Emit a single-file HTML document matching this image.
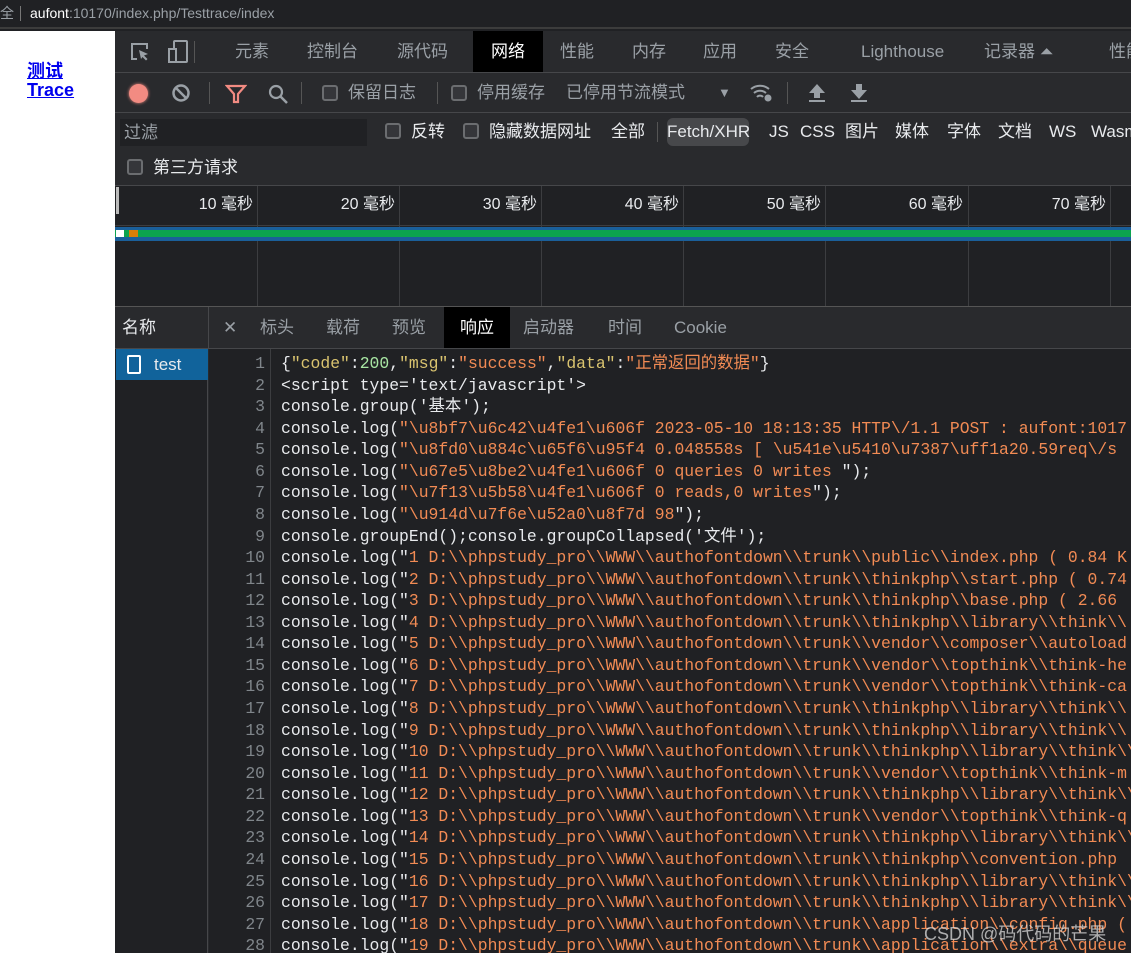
<!DOCTYPE html>
<html><head><meta charset="utf-8"><style>
*{margin:0;padding:0;box-sizing:border-box}
html,body{overflow:hidden}
body{width:1131px;height:953px;overflow:hidden;background:#202124;font-family:"Liberation Sans","Noto Sans CJK SC",sans-serif;position:relative;color:#bdc1c6}
.abs{position:absolute}
.top{left:0;top:0;width:1131px;height:29px;background:#202124;font-size:14px;color:#9aa0a6;line-height:26px;border-bottom:2px solid #3c3c3c}
.page{left:0;top:31px;width:115px;height:922px;background:#fff}
.page a{position:absolute;left:27px;color:#00e;font-weight:bold;font-size:18px;text-decoration:underline}
.dt{left:115px;top:31px;width:1016px;height:922px;background:#292a2d;overflow:hidden}
.row{position:absolute;left:0;width:1016px;white-space:nowrap;font-size:17px;color:#9aa0a6}
.row span{position:absolute}
.cb{position:absolute;width:16px;height:16px;border:2px solid #6b6d70;border-radius:3px;background:#35363a}
.hl{position:absolute;height:1px;background:#46474a;left:0;width:1016px}
.codewrap{position:absolute;left:281px;top:353px;width:850px;height:600px;overflow:hidden}
.code{font-family:"Liberation Mono","Noto Sans CJK SC",monospace;font-size:16.4px;line-height:21.56px;color:#e8eaed;white-space:pre}
.ln{position:absolute;left:209px;width:56px;top:353px;text-align:right;font-family:"Liberation Mono",monospace;font-size:16.4px;line-height:21.56px;color:#80868b;white-space:pre}
.s{color:#f28b54}.k{color:#d9c36f}.n{color:#a8e6a3}
</style></head><body>
<div class="abs top"><span style="position:absolute;left:0">全</span><span style="position:absolute;left:20px;top:6px;width:1px;height:15px;background:#777"></span><span style="position:absolute;left:30px"><span style="color:#fff">aufont</span>:10170/index.php/Testtrace/index</span></div>
<div class="abs page"><a style="top:26px">测试</a><a style="top:49px">Trace</a></div>
<div class="abs dt">
 <div class="row" style="top:0;height:41px;line-height:42px">
  <svg style="position:absolute;left:14px;top:10px" width="22" height="22" viewBox="0 0 22 22"><path d="M8 18H3V3h15v5" fill="none" stroke="#9aa0a6" stroke-width="2"/><path d="M10 9l9 4-4 1.5 3.5 3.5-1.5 1.5-3.5-3.5L12 18z" fill="#9aa0a6"/></svg>
  <svg style="position:absolute;left:52px;top:9px" width="22" height="24" viewBox="0 0 22 24"><rect x="7" y="1" width="13" height="21" rx="1" fill="none" stroke="#9aa0a6" stroke-width="2"/><rect x="2" y="9" width="7" height="13" fill="#292a2d" stroke="#9aa0a6" stroke-width="2"/></svg>
  <i style="position:absolute;left:79px;top:10px;width:1px;height:22px;background:#555"></i>
  <span style="left:120px">元素</span><span style="left:192px">控制台</span><span style="left:282px">源代码</span>
  <span style="left:358px;width:70px;height:41px;background:#000;color:#fff;text-align:center">网络</span>
  <span style="left:445px">性能</span><span style="left:517px">内存</span><span style="left:588px">应用</span><span style="left:660px">安全</span><span style="left:746px">Lighthouse</span><span style="left:869px">记录器 ⏶</span><span style="left:994px">性能</span>
 </div>
 <div class="hl" style="top:41px"></div>
 <div class="row" style="top:42px;height:40px;line-height:40px">
  <i style="position:absolute;left:14px;top:11px;width:19px;height:19px;border-radius:50%;background:#f28b82;box-shadow:0 0 3px #f28b82"></i>
  <svg style="position:absolute;left:56px;top:10px" width="20" height="20" viewBox="0 0 20 20"><circle cx="10" cy="10" r="7.5" fill="none" stroke="#9aa0a6" stroke-width="2.5"/><path d="M5 5l10 10" stroke="#9aa0a6" stroke-width="2.5"/></svg>
  <i style="position:absolute;left:94px;top:9px;width:1px;height:22px;background:#555"></i>
  <svg style="position:absolute;left:110px;top:11px" width="22" height="20" viewBox="0 0 22 20"><path d="M2 2h18l-7 8v8h-4v-8z" fill="none" stroke="#f28b82" stroke-width="2.2"/></svg>
  <svg style="position:absolute;left:152px;top:10px" width="22" height="22" viewBox="0 0 22 22"><circle cx="9" cy="9" r="6" fill="none" stroke="#9aa0a6" stroke-width="2.2"/><path d="M13 13l7 7" stroke="#9aa0a6" stroke-width="2.5"/></svg>
  <i style="position:absolute;left:186px;top:9px;width:1px;height:22px;background:#555"></i>
  <i class="cb" style="left:207px;top:12px"></i><span style="left:233px">保留日志</span>
  <i style="position:absolute;left:322px;top:9px;width:1px;height:22px;background:#555"></i>
  <i class="cb" style="left:336px;top:12px"></i><span style="left:362px">停用缓存</span>
  <span style="left:451px">已停用节流模式</span><span style="left:603px;font-size:13px">▼</span>
  <svg style="position:absolute;left:634px;top:9px" width="26" height="22" viewBox="0 0 26 22"><path d="M2 7a14 14 0 0 1 18 0M5 11a9 9 0 0 1 12 0M8 15a4 4 0 0 1 6 0" fill="none" stroke="#9aa0a6" stroke-width="2"/><circle cx="19" cy="16" r="3.5" fill="#9aa0a6"/></svg>
  <i style="position:absolute;left:672px;top:9px;width:1px;height:22px;background:#555"></i>
  <svg style="position:absolute;left:693px;top:10px" width="18" height="20" viewBox="0 0 18 20"><path d="M9 1l8 9h-5v5H6v-5H1z" fill="#9aa0a6"/><rect x="1" y="17" width="16" height="2" fill="#9aa0a6"/></svg>
  <svg style="position:absolute;left:735px;top:10px" width="18" height="20" viewBox="0 0 18 20"><path d="M6 1h6v6h5l-8 9-8-9h5z" fill="#9aa0a6"/><rect x="1" y="17" width="16" height="2" fill="#9aa0a6"/></svg>
 </div>
 <div class="hl" style="top:81px"></div>
 <div class="row" style="top:82px;height:37px;line-height:38px;color:#e8eaed">
  <span style="left:5px;top:6px;width:247px;height:27px;background:#202124;line-height:27px;padding-left:4px;color:#9aa0a6">过滤</span>
  <i class="cb" style="left:270px;top:10px"></i><span style="left:296px">反转</span>
  <i class="cb" style="left:348px;top:10px"></i><span style="left:374px">隐藏数据网址</span>
  <span style="left:496px">全部</span><i style="position:absolute;left:542px;top:9px;width:1px;height:20px;background:#555"></i>
  <span style="left:552px;top:5px;height:28px;width:82px;line-height:28px;background:#47484b;border-radius:6px;text-align:center">Fetch/XHR</span>
  <span style="left:654px">JS</span><span style="left:685px">CSS</span><span style="left:730px">图片</span><span style="left:780px">媒体</span><span style="left:832px">字体</span><span style="left:883px">文档</span><span style="left:934px">WS</span><span style="left:976px">Wasm</span>
 </div>
 <div class="row" style="top:119px;height:35px;line-height:35px;color:#e8eaed">
  <i class="cb" style="left:12px;top:9px"></i><span style="left:38px">第三方请求</span>
 </div>
 <div class="hl" style="top:154px"></div>
 <div style="position:absolute;left:0;top:155px;width:1016px;height:120px;background:#202124"></div>
 <i style="position:absolute;left:1px;top:156px;width:3px;height:27px;background:#bbb"></i>
 <div class="row" style="top:155px;height:40px;line-height:38px;color:#e8eaed;font-size:16px">
  <span style="left:0;width:138px;text-align:right">10 毫秒</span><span style="left:142px;width:138px;text-align:right">20 毫秒</span><span style="left:284px;width:138px;text-align:right">30 毫秒</span><span style="left:426px;width:138px;text-align:right">40 毫秒</span><span style="left:568px;width:138px;text-align:right">50 毫秒</span><span style="left:710px;width:138px;text-align:right">60 毫秒</span><span style="left:853px;width:138px;text-align:right">70 毫秒</span>
 </div>
 <div style="position:absolute;left:0;top:194px;width:1016px;height:1px;background:#3c3d40"></div>
 <div style="position:absolute;left:142px;top:155px;width:1px;height:120px;background:#3c3d40"></div>
 <div style="position:absolute;left:284px;top:155px;width:1px;height:120px;background:#3c3d40"></div>
 <div style="position:absolute;left:426px;top:155px;width:1px;height:120px;background:#3c3d40"></div>
 <div style="position:absolute;left:568px;top:155px;width:1px;height:120px;background:#3c3d40"></div>
 <div style="position:absolute;left:710px;top:155px;width:1px;height:120px;background:#3c3d40"></div>
 <div style="position:absolute;left:853px;top:155px;width:1px;height:120px;background:#3c3d40"></div>
 <div style="position:absolute;left:995px;top:155px;width:1px;height:120px;background:#3c3d40"></div>
 <div style="position:absolute;left:0;top:196px;width:1016px;height:14px;background:#1a5f9a"></div>
 <div style="position:absolute;left:0;top:199px;width:1016px;height:7px;background:#0ca34f"></div>
 <div style="position:absolute;left:1px;top:199px;width:8px;height:7px;background:#fff"></div>
 <div style="position:absolute;left:14px;top:199px;width:9px;height:7px;background:#d97f08"></div>
 <div class="hl" style="top:275px;background:#555"></div>
 <div style="position:absolute;left:0;top:276px;width:93px;height:646px;background:#202124;border-right:1px solid #46474a"></div>
 <div class="row" style="top:276px;height:41px;line-height:42px;background:#292a2d;color:#e8eaed">
  <span style="left:7px">名称</span>
  <i style="position:absolute;left:93px;top:0;width:1px;height:41px;background:#46474a"></i>
  <span style="left:108px;color:#9aa0a6">✕</span>
  <span style="left:145px;color:#9aa0a6">标头</span><span style="left:211px;color:#9aa0a6">载荷</span><span style="left:277px;color:#9aa0a6">预览</span>
  <span style="left:329px;width:66px;height:41px;background:#000;color:#fff;text-align:center">响应</span>
  <span style="left:408px;color:#9aa0a6">启动器</span><span style="left:493px;color:#9aa0a6">时间</span><span style="left:559px;color:#9aa0a6">Cookie</span>
 </div>
 <div class="hl" style="top:317px"></div>
 <div style="position:absolute;left:1px;top:318px;width:92px;height:31px;background:#11639b;color:#e8eaed;font-size:17px;line-height:31px">
  <i style="position:absolute;left:11px;top:6px;width:14px;height:19px;border:2px solid #fff;border-radius:2px"></i><span style="position:absolute;left:38px">test</span></div>
 <div style="position:absolute;left:94px;top:318px;width:922px;height:604px;background:#202124"></div>
 <div style="position:absolute;left:155px;top:318px;width:1px;height:604px;background:#3c3d40"></div>
</div>
<div class="ln">1
2
3
4
5
6
7
8
9
10
11
12
13
14
15
16
17
18
19
20
21
22
23
24
25
26
27
28</div>
<div class="codewrap"><div class="code">{<span class="k">"code"</span>:<span class="n">200</span>,<span class="k">"msg"</span>:<span class="s">"success"</span>,<span class="k">"data"</span>:<span class="s">"正常返回的数据"</span>}
&lt;script type='text/javascript'&gt;
console.group('基本');
console.log(<span class="s">"\u8bf7\u6c42\u4fe1\u606f 2023-05-10 18:13:35 HTTP\/1.1 POST : aufont:1017</span>
console.log(<span class="s">"\u8fd0\u884c\u65f6\u95f4 0.048558s [ \u541e\u5410\u7387\uff1a20.59req\/s </span>
console.log(<span class="s">"\u67e5\u8be2\u4fe1\u606f 0 queries 0 writes </span>");
console.log(<span class="s">"\u7f13\u5b58\u4fe1\u606f 0 reads,0 writes</span>");
console.log(<span class="s">"\u914d\u7f6e\u52a0\u8f7d 98</span>");
console.groupEnd();console.groupCollapsed('文件');
console.log("<span class="s">1 D:\\phpstudy_pro\\WWW\\authofontdown\\trunk\\public\\index.php ( 0.84 K</span>
console.log("<span class="s">2 D:\\phpstudy_pro\\WWW\\authofontdown\\trunk\\thinkphp\\start.php ( 0.74</span>
console.log("<span class="s">3 D:\\phpstudy_pro\\WWW\\authofontdown\\trunk\\thinkphp\\base.php ( 2.66</span>
console.log("<span class="s">4 D:\\phpstudy_pro\\WWW\\authofontdown\\trunk\\thinkphp\\library\\think\\</span>
console.log("<span class="s">5 D:\\phpstudy_pro\\WWW\\authofontdown\\trunk\\vendor\\composer\\autoload</span>
console.log("<span class="s">6 D:\\phpstudy_pro\\WWW\\authofontdown\\trunk\\vendor\\topthink\\think-he</span>
console.log("<span class="s">7 D:\\phpstudy_pro\\WWW\\authofontdown\\trunk\\vendor\\topthink\\think-ca</span>
console.log("<span class="s">8 D:\\phpstudy_pro\\WWW\\authofontdown\\trunk\\thinkphp\\library\\think\\</span>
console.log("<span class="s">9 D:\\phpstudy_pro\\WWW\\authofontdown\\trunk\\thinkphp\\library\\think\\</span>
console.log("<span class="s">10 D:\\phpstudy_pro\\WWW\\authofontdown\\trunk\\thinkphp\\library\\think\\</span>
console.log("<span class="s">11 D:\\phpstudy_pro\\WWW\\authofontdown\\trunk\\vendor\\topthink\\think-m</span>
console.log("<span class="s">12 D:\\phpstudy_pro\\WWW\\authofontdown\\trunk\\thinkphp\\library\\think\\</span>
console.log("<span class="s">13 D:\\phpstudy_pro\\WWW\\authofontdown\\trunk\\vendor\\topthink\\think-q</span>
console.log("<span class="s">14 D:\\phpstudy_pro\\WWW\\authofontdown\\trunk\\thinkphp\\library\\think\\</span>
console.log("<span class="s">15 D:\\phpstudy_pro\\WWW\\authofontdown\\trunk\\thinkphp\\convention.php </span>
console.log("<span class="s">16 D:\\phpstudy_pro\\WWW\\authofontdown\\trunk\\thinkphp\\library\\think\\</span>
console.log("<span class="s">17 D:\\phpstudy_pro\\WWW\\authofontdown\\trunk\\thinkphp\\library\\think\\</span>
console.log("<span class="s">18 D:\\phpstudy_pro\\WWW\\authofontdown\\trunk\\application\\config.php (</span>
console.log("<span class="s">19 D:\\phpstudy_pro\\WWW\\authofontdown\\trunk\\application\\extra\\queue</span></div></div>
<div class="abs" style="left:924px;top:920px;font-size:18px;color:rgba(220,220,220,0.75);white-space:nowrap">CSDN @码代码的芒果</div>
</body></html>
